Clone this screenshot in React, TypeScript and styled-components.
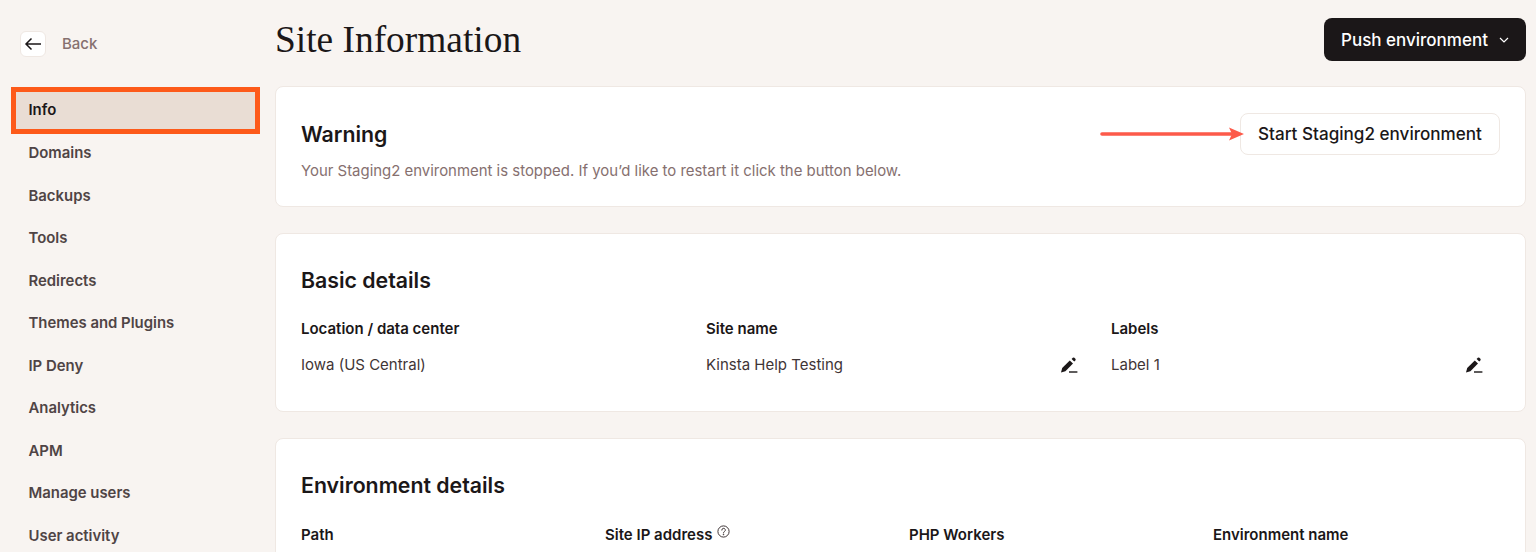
import React from "react";
import styled, { createGlobalStyle } from "styled-components";

const Global = createGlobalStyle`
  html, body { margin: 0; padding: 0; height: 552px; overflow: hidden; background: #f8f4f1; }
  body { font-family: Inter, "Liberation Sans", sans-serif; color: #1b1718; }
  * { box-sizing: border-box; }
`;

const Page = styled.div`
  display: flex;
  width: 1536px;
  height: 552px;
  overflow: hidden;
`;

const Sidebar = styled.aside`
  width: 275px;
  flex: none;
  padding: 31px 15px 0 11px;
`;

const BackRow = styled.div`
  display: flex;
  align-items: center;
  gap: 16px;
  margin-left: 9px;
  height: 26px;
  margin-bottom: 30px;
`;

const BackButton = styled.div`
  width: 26px;
  height: 26px;
  background: #fff;
  border: 1px solid #efe8e3;
  border-radius: 6px;
  display: flex;
  align-items: center;
  justify-content: center;
`;

const BackText = styled.span`
  font-size: 15px;
  font-weight: 500;
  color: #86706f;
  padding-bottom: 2px;
`;

const Nav = styled.nav`
  display: flex;
  flex-direction: column;
`;

const NavItem = styled.div<{ $active?: boolean }>`
  height: ${(p) => (p.$active ? "47px" : "42.5px")};
  margin-bottom: ${(p) => (p.$active ? "-2px" : "0")};
  padding-left: ${(p) => (p.$active ? "12.5px" : "17.5px")};
  padding-bottom: ${(p) => (p.$active ? "2px" : "0")};
  display: flex;
  align-items: center;
  font-size: 14.9px;
  font-weight: 600;
  color: ${(p) => (p.$active ? "#1b1718" : "#4f4445")};
  background: ${(p) => (p.$active ? "#e9ddd4" : "transparent")};
  border: ${(p) => (p.$active ? "5px solid #fd5a1a" : "none")};
`;

const Main = styled.main`
  flex: 1;
  padding: 18px 10px 0 0;
  min-width: 0;
`;

const TopBar = styled.div`
  display: flex;
  align-items: center;
  justify-content: space-between;
  height: 43px;
  margin-bottom: 25px;
`;

const Title = styled.h1`
  margin: 0;
  font-family: "Liberation Serif", serif;
  font-weight: 400;
  font-size: 37.4px;
  line-height: 43px;
  color: #1b1718;
`;

const PushButton = styled.button`
  height: 43px;
  width: 202px;
  display: flex;
  align-items: center;
  justify-content: center;
  gap: 11px;
  background: #1b1718;
  color: #fff;
  border: none;
  border-radius: 8px;
  font-family: inherit;
  font-size: 17px;
  font-weight: 500;
`;

const Card = styled.section`
  background: #fff;
  border: 1px solid #efe8e3;
  border-radius: 8px;
  padding: 25px;
  margin-bottom: 26px;
`;

const WarningCard = styled(Card)`
  height: 121px;
`;

const WarningHead = styled.div`
  display: flex;
  align-items: center;
  height: 42px;
  margin-top: 1px;
`;

const CardTitle = styled.h2`
  margin: 0;
  font-size: 21.3px;
  line-height: 28px;
  font-weight: 600;
  color: #1b1718;
`;

const Grow = styled.div`
  flex: 1;
`;

const ArrowMark = styled.svg`
  flex: none;
  margin-right: -4px;
  position: relative;
  z-index: 1;
`;

const StartButton = styled.button`
  height: 42px;
  width: 260px;
  padding: 0 0 2px;
  background: #fff;
  border: 1px solid #efe8e3;
  border-radius: 8px;
  font-family: inherit;
  font-size: 17.1px;
  font-weight: 500;
  color: #1b1718;
`;

const Description = styled.p`
  margin: 6px 0 0;
  font-size: 14.93px;
  line-height: 20px;
  color: #86706f;
`;

const DetailsGrid = styled.div<{ $cols: number; $col: number; $top: number }>`
  display: grid;
  grid-template-columns: repeat(${(p) => p.$cols}, ${(p) => p.$col}px);
  margin-top: ${(p) => p.$top}px;
`;

const Field = styled.div`
  display: flex;
  flex-direction: column;
  gap: 16px;
`;

const Label = styled.div`
  display: flex;
  align-items: flex-start;
  gap: 5px;
  font-size: 15px;
  line-height: 20px;
  font-weight: 600;
  color: #1b1718;
`;

const ValueRow = styled.div`
  display: flex;
  align-items: center;
  justify-content: space-between;
  padding-right: 33px;
  font-size: 15px;
  line-height: 20px;
  color: #3f3536;
`;

const BasicCard = styled(Card)`
  height: 179px;
  padding-top: 32px;
`;

const EnvCard = styled(Card)`
  padding-top: 32px;
`;

const EditIcon = () => (
  <svg width="18" height="18" viewBox="0 0 18 18" aria-hidden="true">
    <path d="M1 16.4 L2.2 12 L9.8 4.4 L13 7.6 L5.4 15.2 Z" fill="#1b1718" />
    <path d="M11.6 3 L12.8 1.8 Q13.6 1.2 14.4 1.8 L15.4 2.8 Q16 3.6 15.4 4.4 L14.2 5.6 Z" fill="#1b1718" />
    <rect x="9" y="15.3" width="8.4" height="1.4" fill="#1b1718" />
  </svg>
);

const HelpIcon = () => (
  <svg width="13" height="13" viewBox="0 0 13 13" fill="none" stroke="#3f3536" strokeWidth="1" aria-hidden="true">
    <circle cx="6.5" cy="6.5" r="5.6" />
    <path d="M4.8 5.1a1.75 1.75 0 1 1 2.6 1.5c-.6.35-.9.7-.9 1.3" strokeLinecap="round" />
    <circle cx="6.5" cy="9.6" r=".35" fill="#3f3536" />
  </svg>
);

const items = ["Domains", "Backups", "Tools", "Redirects", "Themes and Plugins", "IP Deny", "Analytics", "APM", "Manage users", "User activity"];

export default function App() {
  return (
    <Page>
      <Global />
      <Sidebar>
        <BackRow>
          <BackButton>
            <svg width="18" height="14" viewBox="0 0 18 14" fill="none" stroke="#1b1718" strokeWidth="1.5" aria-hidden="true">
              <path d="M17 7H2M7.5 1.5 2 7l5.5 5.5" />
            </svg>
          </BackButton>
          <BackText>Back</BackText>
        </BackRow>
        <Nav>
          <NavItem $active>Info</NavItem>
          {items.map((t) => (
            <NavItem key={t}>{t}</NavItem>
          ))}
        </Nav>
      </Sidebar>
      <Main>
        <TopBar>
          <Title>Site Information</Title>
          <PushButton>
            Push environment
            <svg width="10" height="6" viewBox="0 0 10 6" fill="none" stroke="#fff" strokeWidth="1.2" aria-hidden="true">
              <path d="M1 1l4 4 4-4" />
            </svg>
          </PushButton>
        </TopBar>
        <WarningCard>
          <WarningHead>
            <CardTitle>Warning</CardTitle>
            <Grow />
            <ArrowMark width="144" height="14" viewBox="0 0 144 14" aria-hidden="true">
              <path d="M2 7H134" stroke="#fd5a4a" strokeWidth="3.6" strokeLinecap="round" />
              <path d="M129 .5 144 7l-15 6.5 3-6.5z" fill="#fd5a4a" />
            </ArrowMark>
            <StartButton>Start Staging2 environment</StartButton>
          </WarningHead>
          <Description>Your Staging2 environment is stopped. If you’d like to restart it click the button below.</Description>
        </WarningCard>
        <BasicCard>
          <CardTitle>Basic details</CardTitle>
          <DetailsGrid $cols={3} $col={405} $top={25}>
            <Field>
              <Label>Location / data center</Label>
              <ValueRow>Iowa (US Central)</ValueRow>
            </Field>
            <Field>
              <Label>Site name</Label>
              <ValueRow>
                Kinsta Help Testing
                <EditIcon />
              </ValueRow>
            </Field>
            <Field>
              <Label>Labels</Label>
              <ValueRow>
                Label 1
                <EditIcon />
              </ValueRow>
            </Field>
          </DetailsGrid>
        </BasicCard>
        <EnvCard>
          <CardTitle>Environment details</CardTitle>
          <DetailsGrid $cols={4} $col={304} $top={26}>
            <Label>Path</Label>
            <Label>
              Site IP address
              <HelpIcon />
            </Label>
            <Label>PHP Workers</Label>
            <Label>Environment name</Label>
          </DetailsGrid>
        </EnvCard>
      </Main>
    </Page>
  );
}
